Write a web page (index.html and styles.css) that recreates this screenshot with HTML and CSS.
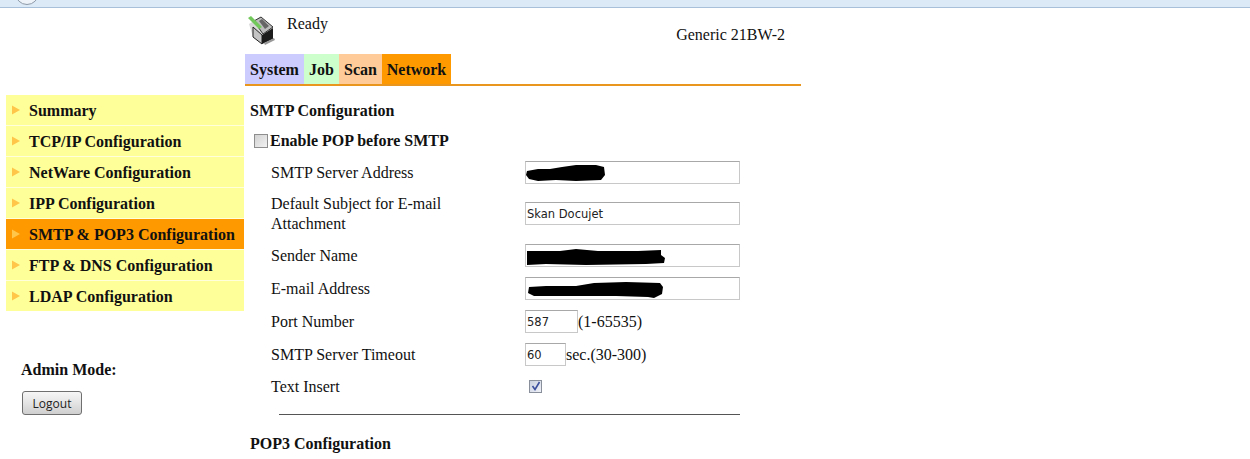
FILE: index.html
```html
<!DOCTYPE html>
<html lang="en">
<head>
<meta charset="utf-8">
<title>SMTP Configuration</title>
<link rel="stylesheet" href="styles.css">
</head>
<body>
<div class="browser-bar"><span class="browser-circle"></span></div>
<div class="page">
  <aside class="side">
    <nav class="menu">
      <a class="menu-item"><svg class="arrow" viewBox="0 0 10 10"><path d="M1 0.5 9 5 1 9.5Z"/></svg>Summary</a>
      <a class="menu-item"><svg class="arrow" viewBox="0 0 10 10"><path d="M1 0.5 9 5 1 9.5Z"/></svg>TCP/IP Configuration</a>
      <a class="menu-item"><svg class="arrow" viewBox="0 0 10 10"><path d="M1 0.5 9 5 1 9.5Z"/></svg>NetWare Configuration</a>
      <a class="menu-item"><svg class="arrow" viewBox="0 0 10 10"><path d="M1 0.5 9 5 1 9.5Z"/></svg>IPP Configuration</a>
      <a class="menu-item active"><svg class="arrow" viewBox="0 0 10 10"><path d="M1 0.5 9 5 1 9.5Z"/></svg>SMTP &amp; POP3 Configuration</a>
      <a class="menu-item"><svg class="arrow" viewBox="0 0 10 10"><path d="M1 0.5 9 5 1 9.5Z"/></svg>FTP &amp; DNS Configuration</a>
      <a class="menu-item"><svg class="arrow" viewBox="0 0 10 10"><path d="M1 0.5 9 5 1 9.5Z"/></svg>LDAP Configuration</a>
    </nav>
    <div class="admin">
      <div class="admin-title">Admin Mode:</div>
      <button class="logout" type="button">Logout</button>
    </div>
  </aside>
  <main class="main">
    <header class="status">
      <svg class="printer" width="32" height="32" viewBox="0 0 32 32">
        <path d="M3 11 14 4 27 14 27 26 16 31 7 24Z" fill="#d9d9d9"/>
        <path d="M7 14 16 22 16 31 7 24Z" fill="#c4c4c4" stroke="#222" stroke-width="1"/>
        <path d="M16 22 27 15 27 26 16 31Z" fill="#1c1c1c"/>
        <path d="M8 8 15 4 27 14 17 21Z" fill="#bdbdbd" stroke="#333" stroke-width="1"/>
        <path d="M13 8 16 6 23 13 19 16Z" fill="#666"/>
        <path d="M2 5 5 3 16 14 13 16Z" fill="#72c85a"/>
        <path d="M18 30 28 25 29 27 19 32Z" fill="#999"/>
      </svg>
      <span class="ready">Ready</span>
      <span class="model">Generic 21BW-2</span>
    </header>
    <div class="tabs">
      <a class="tab tab-system">System</a>
      <a class="tab tab-job">Job</a>
      <a class="tab tab-scan">Scan</a>
      <a class="tab tab-network">Network</a>
    </div>
    <section class="content">
      <h2 class="heading">SMTP Configuration</h2>
      <label class="pop-check"><span class="check"></span>Enable POP before SMTP</label>
      <div class="form">
        <div class="row row-a">
          <div class="label">SMTP Server Address</div>
          <div class="field"><span class="input wide"></span>
            <svg class="redact" width="80" height="16" viewBox="0 0 80 16"><path d="M1 6 12 4 24 4 36 2 50 0 70 0 78 2 79 10 75 15 50 16 30 15 12 16 3 14 0 10Z"/></svg>
          </div>
        </div>
        <div class="row row-b">
          <div class="label">Default Subject for E-mail Attachment</div>
          <div class="field"><span class="input wide">Skan Docujet</span></div>
        </div>
        <div class="row row-c">
          <div class="label">Sender Name</div>
          <div class="field"><span class="input wide"></span>
            <svg class="redact" width="140" height="18" viewBox="0 0 140 18"><path d="M1 3 34 3 50 1 72 3 112 3 135 2 135 7 139 10 138 15 120 16 60 17 20 16 1 17Z"/></svg>
          </div>
        </div>
        <div class="row row-d">
          <div class="label">E-mail Address</div>
          <div class="field"><span class="input wide"></span>
            <svg class="redact" width="138" height="18" viewBox="0 0 138 18"><path d="M3 6 20 5 50 5 68 2 100 1 134 2 137 6 136 13 128 17 122 16 90 15 60 15 30 15 8 15 2 12Z"/></svg>
          </div>
        </div>
        <div class="row row-e">
          <div class="label">Port Number</div>
          <div class="field"><span class="input port">587</span><span class="hint">(1-65535)</span></div>
        </div>
        <div class="row row-e">
          <div class="label">SMTP Server Timeout</div>
          <div class="field"><span class="input timeout">60</span><span class="hint">sec.(30-300)</span></div>
        </div>
        <div class="row row-f">
          <div class="label">Text Insert</div>
          <div class="field"><span class="check-on"><svg width="10" height="10" viewBox="0 0 10 10"><path d="M1.5 5 4 8.5 8.5 1" fill="none" stroke="#3c4f9e" stroke-width="1.6"/></svg></span></div>
        </div>
      </div>
      <hr class="rule">
      <h2 class="heading">POP3 Configuration</h2>
    </section>
  </main>
</div>
</body>
</html>
```

FILE: styles.css
```css
html, body { margin: 0; padding: 0; background: #fff; }
body {
  font-family: "Liberation Serif", "Times New Roman", serif;
  font-size: 16px;
  color: #111;
  height: 459px;
  overflow: hidden;
}
.browser-bar {
  height: 7px;
  background: #dce9f7;
  border-bottom: 1px solid #a9c0da;
  overflow: hidden;
  padding-left: 15px;
}
.browser-circle {
  display: block;
  width: 22px;
  height: 22px;
  margin-top: -19px;
  border: 1px solid #8d9aa8;
  border-radius: 50%;
  background: #eef3f9;
}
.page { display: flex; align-items: flex-start; width: 801px; }
.side { width: 238px; margin: 0 1px 0 6px; padding-top: 87px; flex: none; }
.menu { display: flex; flex-direction: column; gap: 1px; background: #ffffdc; }
.menu-item {
  display: flex;
  align-items: center;
  box-sizing: border-box;
  height: 30px;
  background: #ffff99;
  font-weight: bold;
  padding: 2px 0 0 5px;
  color: #111;
}
.menu-item.active { background: #ff9900; }
.arrow { width: 10px; height: 10px; margin: -2px 8px 0 0; fill: #ffc64a; flex: none; }
.admin { padding: 49px 0 0 15px; }
.admin-title { font-weight: bold; line-height: 20px; }
.logout {
  display: block;
  margin: 11px 0 0 1px;
  width: 60px;
  height: 24px;
  padding: 0;
  border: 1px solid #6f6f6f;
  border-radius: 3px;
  background: linear-gradient(#f6f6f6, #e4e4e4 50%, #cfcfcf);
  font-family: "Open Sans", "DejaVu Sans", sans-serif;
  font-size: 12px;
  color: #222;
}
.main { flex: 1; min-width: 0; }
.status { height: 46px; display: flex; align-items: flex-start; }
.printer { margin: 5px 0 0 1px; flex: none; }
.ready { margin: 7px 0 0 9px; line-height: 17px; }
.model { margin: 18px 16px 0 auto; line-height: 17px; }
.tabs { display: flex; height: 30px; border-bottom: 2px solid #e8961e; }
.tab { display: flex; align-items: center; justify-content: center; box-sizing: border-box; padding-top: 2px; font-weight: bold; }
.tab-system { width: 59px; background: #ccccff; }
.tab-job { width: 35px; background: #ccffcc; }
.tab-scan { width: 43px; background: #ffcc99; }
.tab-network { width: 69px; background: #ff9900; }
.content { padding: 0 0 0 5px; }
.heading { margin: 0; font-size: 16px; font-weight: bold; line-height: 20px; }
.content > .heading:first-child { margin-top: 15px; }
.pop-check { display: flex; align-items: center; margin: 10px 0 0 4px; font-weight: bold; line-height: 20px; }
.check {
  width: 12px; height: 12px; margin-right: 2px;
  border: 1px solid #8e8e8e;
  background: linear-gradient(135deg, #d2d2d2, #f2f2f2);
  flex: none;
}
.form { margin: 8px 0 0 21px; width: 469px; }
.row { display: grid; grid-template-columns: 254px 215px; align-items: center; }
.row-a { height: 27px; }
.row-b { height: 43px; margin-top: 6px; }
.row-c { height: 27px; margin-top: 7px; }
.row-d { height: 27px; margin-top: 6px; }
.row-e { height: 27px; margin-top: 6px; }
.row-f { height: 20px; margin-top: 8px; }
.label { line-height: 20px; width: 210px; padding-top: 1px; }
.field { position: relative; display: flex; align-items: center; }
.input {
  box-sizing: border-box;
  display: block;
  height: 23px;
  border: 1px solid #c8c8c8;
  border-top-color: #a8a8a8;
  background: #fff;
  padding-left: 1px;
  font-family: "DejaVu Sans", sans-serif;
  font-size: 11.5px;
  line-height: 23px;
  color: #222;
}
.wide { width: 215px; }
.port { width: 53px; }
.timeout { width: 41px; }
.hint { margin-left: 0; }
.redact { position: absolute; left: 1px; top: 4px; fill: #000; }
.check-on {
  display: flex; align-items: center; justify-content: center;
  box-sizing: border-box;
  width: 13px; height: 13px; margin: -1px 0 0 4px;
  border: 1px solid #8a8f9c;
  background: linear-gradient(135deg, #c9cfe0, #f0f2f8);
}
.rule { margin: 18px 0 0 29px; width: 461px; height: 1px; border: 0; background: #555; }
.rule + .heading { margin-top: 19px; }
```
